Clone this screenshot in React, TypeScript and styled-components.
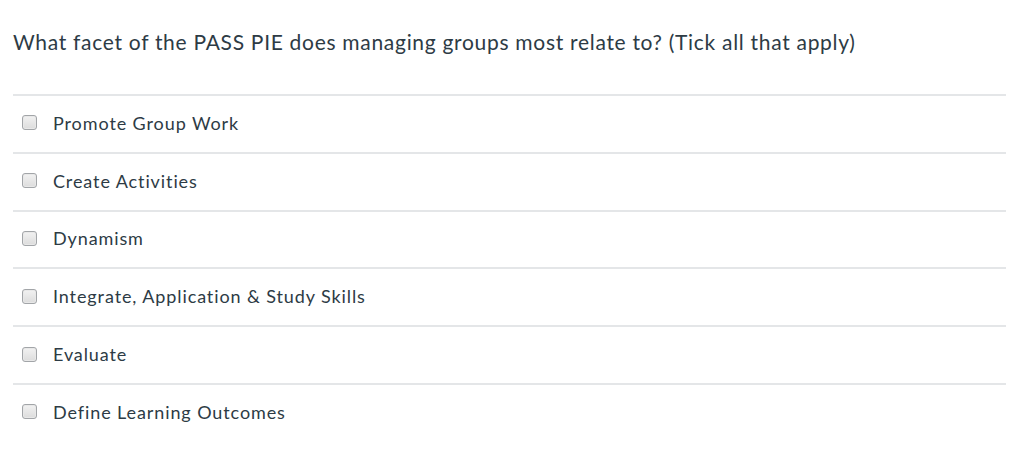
import React from 'react';
import styled, { createGlobalStyle } from 'styled-components';

const GlobalStyle = createGlobalStyle`
  body {
    margin: 0;
    background: #ffffff;
    font-family: Lato, "Open Sans", sans-serif;
    color: #2d3b45;
  }
`;

const Question = styled.div`
  width: 993px;
  padding: 27px 0 0 13px;
`;

const Title = styled.h2`
  margin: 0 0 38px;
  font-size: 21px;
  font-weight: 400;
  line-height: 29px;
  letter-spacing: 0.7px;
  white-space: nowrap;
`;

const Answers = styled.div`
  display: flex;
  flex-direction: column;
`;

const Answer = styled.label`
  display: flex;
  align-items: center;
  gap: 16px;
  box-sizing: border-box;
  height: 57.8px;
  padding: 0 0 2px 9px;
  border-top: 2px solid #e4e6e8;
  font-size: 18px;
  letter-spacing: 0.9px;
`;

const Box = styled.span`
  width: 13px;
  height: 13px;
  border: 1px solid #a2a5a8;
  border-radius: 3px;
  background: linear-gradient(#f2f2f2, #dcdcdc);
  box-shadow: inset 0 0 0 1px #e8e8e8;
  flex-shrink: 0;
`;

const answers = [
  'Promote Group Work',
  'Create Activities',
  'Dynamism',
  'Integrate, Application & Study Skills',
  'Evaluate',
  'Define Learning Outcomes',
];

const App = () => (
  <>
    <GlobalStyle />
    <Question>
      <Title>What facet of the PASS PIE does managing groups most relate to? (Tick all that apply)</Title>
      <Answers>
        {answers.map((a) => (
          <Answer key={a}>
            <Box />
            {a}
          </Answer>
        ))}
      </Answers>
    </Question>
  </>
);

export default App;
